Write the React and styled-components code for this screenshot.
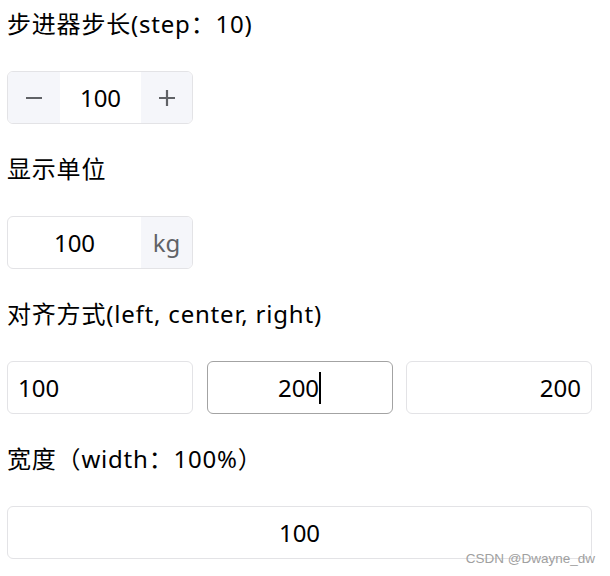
import React from "react";
import styled, { createGlobalStyle } from "styled-components";

const GlobalStyle = createGlobalStyle`
  html, body {
    margin: 0;
    padding: 0;
    background: #fff;
  }
  body {
    font-family: "Noto Sans", "Noto Sans CJK SC", sans-serif;
    color: #000;
  }
`;

const Page = styled.div`
  position: relative;
  width: 592px;
  height: 576px;
  padding: 4px 0 0 7px;
  box-sizing: border-box;
`;

const Section = styled.section`
  margin-bottom: 25px;
`;

const Label = styled.div`
  height: 40px;
  line-height: 40px;
  font-size: 24px;
  letter-spacing: 0.8px;
  margin-bottom: 27px;
  white-space: nowrap;
`;

const Box = styled.div`
  display: flex;
  width: ${(p) => p.width || "186px"};
  height: 53px;
  box-sizing: border-box;
  border: 1px solid ${(p) => (p.focused ? "#a3a3a3" : "#e3e3e6")};
  border-radius: 6px;
  overflow: hidden;
  background: #fff;
`;

const Side = styled.div`
  flex: 0 0 ${(p) => p.size || "52px"};
  display: flex;
  align-items: center;
  justify-content: center;
  background: #f5f6fa;
  color: #606266;
  font-size: 24px;
`;

const Value = styled.div`
  flex: 1;
  display: flex;
  align-items: center;
  justify-content: ${(p) =>
    p.align === "left" ? "flex-start" : p.align === "right" ? "flex-end" : "center"};
  padding: 0 10px;
  font-size: 24px;
  line-height: 1;
`;

const Caret = styled.span`
  display: inline-block;
  width: 2px;
  height: 32px;
  background: #000;
`;

const Row = styled.div`
  display: grid;
  grid-template-columns: repeat(3, 186px);
  column-gap: 13.5px;
`;

const Watermark = styled.div`
  position: absolute;
  right: -3px;
  top: 551px;
  font-family: "Liberation Sans", sans-serif;
  font-size: 13.5px;
  color: #a0a0a0;
  white-space: nowrap;
`;

function MinusIcon() {
  return (
    <svg width="18" height="18" viewBox="0 0 18 18">
      <path d="M1 9h16" stroke="#606266" strokeWidth="2.2" />
    </svg>
  );
}

function PlusIcon() {
  return (
    <svg width="18" height="18" viewBox="0 0 18 18">
      <path d="M1 9h16M9 1v16" stroke="#606266" strokeWidth="2.2" />
    </svg>
  );
}

export default function App() {
  return (
    <>
      <GlobalStyle />
      <Page>
        <Section>
          <Label>步进器步长(step：10)</Label>
          <Box>
            <Side size="52px"><MinusIcon /></Side>
            <Value>100</Value>
            <Side size="51px"><PlusIcon /></Side>
          </Box>
        </Section>

        <Section>
          <Label>显示单位</Label>
          <Box>
            <Value>100</Value>
            <Side size="51px">kg</Side>
          </Box>
        </Section>

        <Section>
          <Label>对齐方式(left, center, right)</Label>
          <Row>
            <Box><Value align="left">100</Value></Box>
            <Box focused><Value>200<Caret /></Value></Box>
            <Box><Value align="right">200</Value></Box>
          </Row>
        </Section>

        <Section>
          <Label>宽度（width：100%）</Label>
          <Box width="585px"><Value>100</Value></Box>
        </Section>

        <Watermark>CSDN @Dwayne_dw</Watermark>
      </Page>
    </>
  );
}
